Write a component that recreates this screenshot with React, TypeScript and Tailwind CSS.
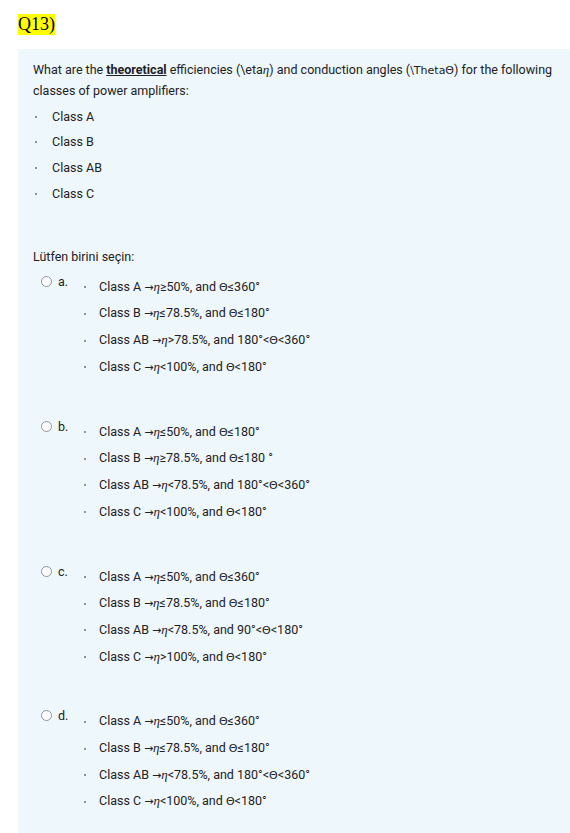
import React from "react";

type Item = { cls: string; eta: string; theta: string };

const options: { label: string; items: Item[] }[] = [
  {
    label: "a.",
    items: [
      { cls: "Class A", eta: "≥50%, and ", theta: "≤360°" },
      { cls: "Class B", eta: "≤78.5%, and ", theta: "≤180°" },
      { cls: "Class AB", eta: ">78.5%, and 180°<", theta: "<360°" },
      { cls: "Class C", eta: "<100%, and ", theta: "<180°" },
    ],
  },
  {
    label: "b.",
    items: [
      { cls: "Class A", eta: "≤50%, and ", theta: "≤180°" },
      { cls: "Class B", eta: "≥78.5%, and ", theta: "≤180 °" },
      { cls: "Class AB", eta: "<78.5%, and 180°<", theta: "<360°" },
      { cls: "Class C", eta: "<100%, and ", theta: "<180°" },
    ],
  },
  {
    label: "c.",
    items: [
      { cls: "Class A", eta: "≤50%, and ", theta: "≤360°" },
      { cls: "Class B", eta: "≤78.5%, and ", theta: "≤180°" },
      { cls: "Class AB", eta: "<78.5%, and 90°<", theta: "<180°" },
      { cls: "Class C", eta: ">100%, and ", theta: "<180°" },
    ],
  },
  {
    label: "d.",
    items: [
      { cls: "Class A", eta: "≤50%, and ", theta: "≤360°" },
      { cls: "Class B", eta: "≤78.5%, and ", theta: "≤180°" },
      { cls: "Class AB", eta: "<78.5%, and 180°<", theta: "<360°" },
      { cls: "Class C", eta: "<100%, and ", theta: "<180°" },
    ],
  },
];

function Dot() {
  return <span className="inline-block w-[2px] h-[2px] rounded-full bg-[#6a737b] shrink-0" />;
}

function Formula({ item }: { item: Item }) {
  return (
    <span>
      {item.cls} <span className="font-['DejaVu_Sans',sans-serif] text-[11px]">→</span>
      <i className="font-['Liberation_Serif',serif] text-[13px]">η</i>
      {item.eta}
      <span className="font-['DejaVu_Sans',sans-serif] text-[11px]">Θ</span>
      {item.theta}
    </span>
  );
}

export default function App() {
  return (
    <div className="min-h-screen bg-white font-['Roboto',sans-serif] text-[12.5px] text-[#1d2125]">
      <div className="pl-[18px] pt-[14px]">
        <span className="bg-[#ffff00] text-black font-['Liberation_Serif',serif] text-[18px] leading-[21px] inline-block">
          Q13)
        </span>
      </div>

      <div className="ml-[18px] mt-[13px] bg-[#eef7fb] pl-[15px] pr-[10px] pt-[11px] pb-[40px]">
        <p className="leading-[20px]">
          What are the <b className="underline">theoretical</b> efficiencies (\eta
          <i className="font-['Liberation_Serif',serif] text-[13px]">η</i>) and conduction angles (
          <span className="font-['DejaVu_Sans',sans-serif] text-[11px]">\ThetaΘ</span>) for the following classes of
          power amplifiers:
        </p>

        <ul className="mt-[6px]">
          {["Class A", "Class B", "Class AB", "Class C"].map((c) => (
            <li key={c} className="flex items-center leading-[20px] mb-[5.67px] pl-[2px] gap-[15px]">
              <Dot />
              <span>{c}</span>
            </li>
          ))}
        </ul>

        <p className="mt-[43px] leading-[20px]">Lütfen birini seçin:</p>

        <div className="mt-[5px]">
          {options.map((o) => (
            <div key={o.label} className="flex items-start pl-[8px] mb-[33.3px]">
              <span className="mt-[4px] w-[11px] h-[11px] rounded-full border border-[#8f959e] bg-white shrink-0" />
              <span className="ml-[6px] w-[20px] leading-[20px] shrink-0">{o.label}</span>
              <ul className="pt-[5px]">
                {o.items.map((it, i) => (
                  <li key={i} className="flex items-center leading-[20px] mb-[5.67px] pl-[6px] gap-[13px]">
                    <Dot />
                    <Formula item={it} />
                  </li>
                ))}
              </ul>
            </div>
          ))}
        </div>
      </div>
    </div>
  );
}
